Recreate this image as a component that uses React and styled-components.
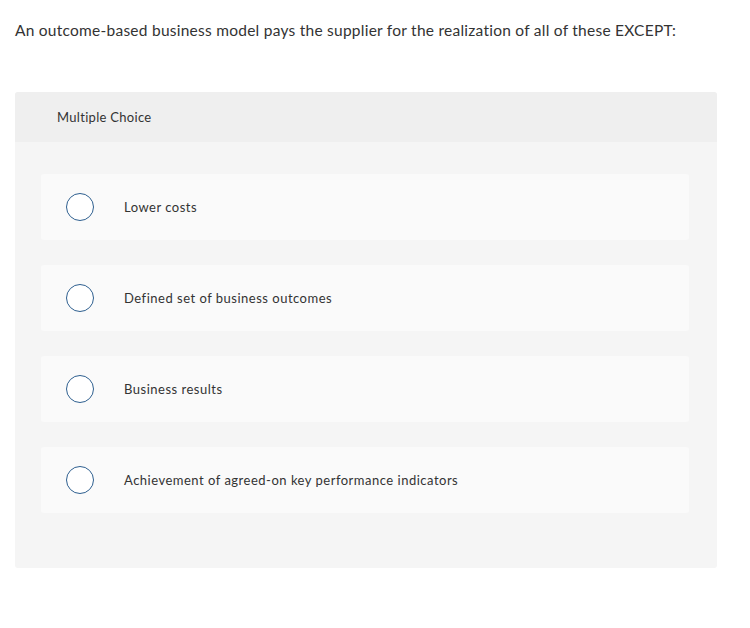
import React from 'react';
import styled, { createGlobalStyle } from 'styled-components';

const options = [
    'Lower costs',
    'Defined set of business outcomes',
    'Business results',
    'Achievement of agreed-on key performance indicators',
];

export default function App() {
    return (
        <Page>
            <GlobalStyle />
            <Question>
                An outcome-based business model pays the supplier for the realization of all of these EXCEPT:
            </Question>
            <Panel>
                <PanelHeader>Multiple Choice</PanelHeader>
                <OptionList>
                    {options.map((text) => (
                        <Option key={text}>
                            <Radio />
                            <OptionText>{text}</OptionText>
                        </Option>
                    ))}
                </OptionList>
            </Panel>
        </Page>
    );
}

// Styles
const GlobalStyle = createGlobalStyle`
    html, body {
        margin: 0;
        background: #fff;
        font-family: "Lato", "Liberation Sans", sans-serif;
        color: #333;
    }
`;

const Page = styled.div`
    padding: 19px 33px 0 15px;
`;

const Question = styled.p`
    margin: 0;
    font-size: 15.5px;
    letter-spacing: 0.25px;
    line-height: 22px;
    color: #333;
`;

const Panel = styled.section`
    margin-top: 51px;
    background: #f5f5f5;
    border-radius: 3px;
    overflow: hidden;
`;

const PanelHeader = styled.header`
    height: 50px;
    display: flex;
    align-items: center;
    padding-left: 42px;
    background: #efefef;
    font-size: 13px;
    letter-spacing: 0.3px;
    color: #333;
`;

const OptionList = styled.div`
    display: flex;
    flex-direction: column;
    gap: 25px;
    padding: 32px 28px 55px 26px;
`;

const Option = styled.div`
    height: 66px;
    display: flex;
    align-items: center;
    padding-left: 25px;
    background: #fafafa;
    border-radius: 3px;
`;

const Radio = styled.span`
    width: 26px;
    height: 26px;
    border: 1.5px solid #2e5f8f;
    border-radius: 50%;
    background: #fff;
    flex-shrink: 0;
`;

const OptionText = styled.span`
    margin-left: 30px;
    font-size: 13px;
    letter-spacing: 0.5px;
    color: #333;
`;
